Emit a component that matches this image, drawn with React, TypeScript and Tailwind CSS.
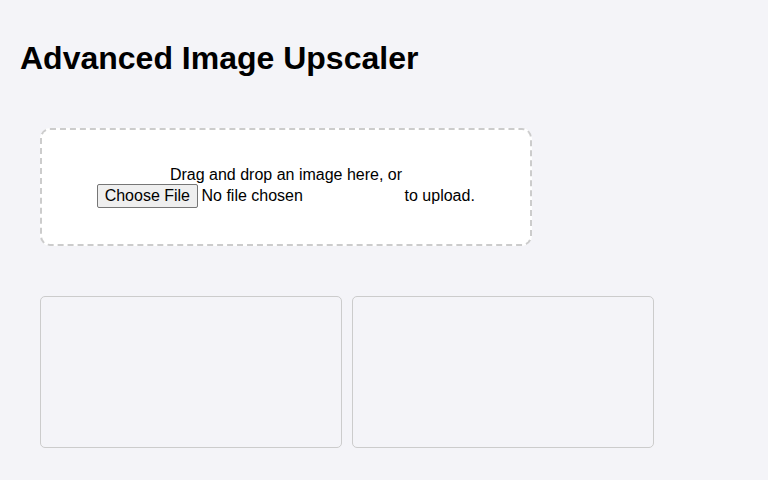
import React from "react";

export default function App() {
  return (
    <div className="min-h-[480px] bg-[#f4f4f8] p-5 text-black" style={{ fontFamily: '"Liberation Sans", Arial, sans-serif' }}>
      <h1 className="mt-5 mb-[21px] text-[32px] font-bold leading-[37px]">Advanced Image Upscaler</h1>
      <div className="m-5 mt-[51px] w-[492px] rounded-[10px] border-2 border-dashed border-[#cccccc] bg-white px-5 pt-[35.5px] pb-[36.5px] text-center text-base leading-[normal]">
        Drag and drop an image here, or{" "}
        <input
          type="file"
          className="text-base file:mr-1 file:rounded-[2px] file:border file:border-solid file:border-[#767676] file:bg-[#efefef] file:px-[6.5px] file:py-[2px] file:text-base file:leading-[normal] file:text-black"
          style={{ fontFamily: '"Liberation Sans", Arial, sans-serif' }}
        />{" "}
        to upload.
      </div>
      <div className="mx-5 mt-[50px] flex gap-[10px]">
        <div className="h-[152px] w-[302px] rounded-[5px] border border-[#cccccc]" />
        <div className="h-[152px] w-[302px] rounded-[5px] border border-[#cccccc]" />
      </div>
    </div>
  );
}
